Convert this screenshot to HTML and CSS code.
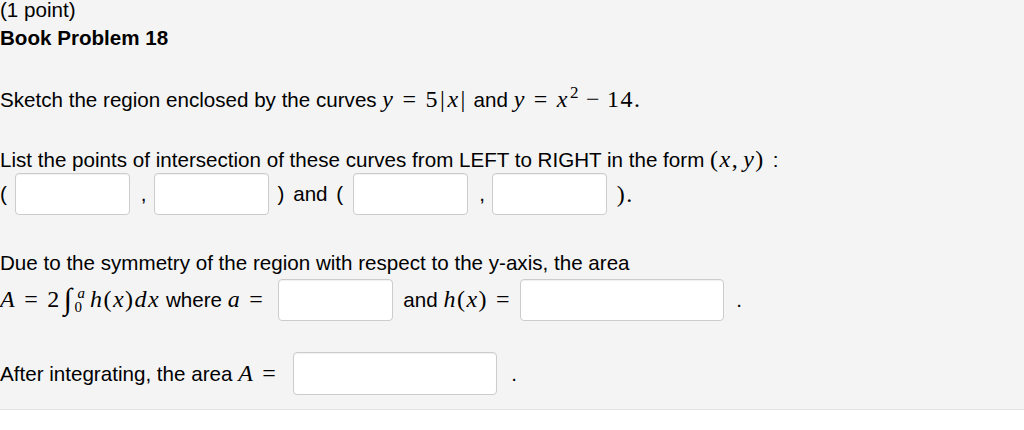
FILE: index.html
```html
<!DOCTYPE html>
<html>
<head>
<meta charset="utf-8">
<title>Book Problem 18</title>
<link rel="stylesheet" href="styles.css">
</head>
<body>
<div class="problem">
  <div class="points">(1 point)</div>
  <div class="title">Book Problem 18</div>

  <p class="text sketch">Sketch the region enclosed by the curves <span class="m"><i>y</i><span class="rel">=</span>5<span class="bar">|</span><i>x</i><span class="bar">|</span></span> and <span class="m"><i>y</i><span class="rel">=</span><i>x</i><sup class="sup">2</sup><span class="bin">−</span>14.</span></p>

  <p class="text list">List the points of intersection of these curves from LEFT to RIGHT in the form <span class="m">(<i>x</i>,<span class="thin"></span><i>y</i>)</span><span class="colon">:</span></p>
  <div class="row r1">
    <span class="piece">(</span>
    <input class="box sm first" type="text">
    <span class="piece comma">,</span>
    <input class="box sm" type="text">
    <span class="piece and">) and (</span>
    <input class="box sm" type="text">
    <span class="piece comma">,</span>
    <input class="box sm" type="text">
    <span class="piece close m">).</span>
  </div>

  <p class="text due">Due to the symmetry of the region with respect to the y-axis, the area</p>
  <div class="row r2">
    <span class="piece"><span class="m"><i>A</i><span class="rel">=</span>2<span class="int-gap"></span><span class="int">∫</span><span class="limits"><i class="up">a</i><span class="lo">0</span></span><span class="int-gap2"></span><i>h</i>(<i>x</i>)<i>dx</i></span> where <span class="m"><i>a</i><span class="rel">=</span></span></span>
    <input class="box sm a-box" type="text">
    <span class="piece andh">and <span class="m"><i>h</i>(<i>x</i>)<span class="rel">=</span></span></span>
    <input class="box lg h-box" type="text">
    <span class="piece dot">.</span>
  </div>

  <div class="row r3">
    <span class="piece">After integrating, the area <span class="m"><i>A</i><span class="rel">=</span></span></span>
    <input class="box lg area-box" type="text">
    <span class="piece dot2">.</span>
  </div>
</div>
</body>
</html>
```

FILE: styles.css
```css
html, body {
  margin: 0;
  padding: 0;
  background: #ffffff;
}

body {
  font-family: "Liberation Sans", Arial, Helvetica, sans-serif;
  font-size: 20.6px;
  color: #000;
}

.problem {
  display: flow-root;
  background: #f4f4f4;
  padding-bottom: 14px;
  border-bottom: 1px solid #e4e4e4;
  box-shadow: 0 1px 0 #d2d2d2;
}

.points {
  line-height: 20px;
}

.title {
  margin-top: 8px;
  line-height: 20px;
  font-weight: bold;
}

.text {
  margin: 0;
  line-height: 24px;
  white-space: nowrap;
}

.sketch { margin-top: 40px; }
.list { margin-top: 36px; }
.due { margin-top: 36px; }

/* math */
.m {
  font-family: "Liberation Serif", "Times New Roman", serif;
  font-size: 24px;
  line-height: 0;
  letter-spacing: 1.5px;
}
.m i {
  font-style: italic;
}
.rel {
  margin: 0 8px;
}
.bin {
  margin: 0 6px;
}
.bar {
  margin: 0 1px;
}
.sup {
  font-size: 17px;
  vertical-align: 9px;
  line-height: 0;
  margin-left: 1px;
}
.thin {
  display: inline-block;
  width: 4px;
}
.colon {
  margin-left: 8px;
}
.int-gap { display: inline-block; width: 3px; }
.int-gap2 { display: inline-block; width: 5px; }
.int {
  font-size: 30px;
  font-style: italic;
  line-height: 0;
  vertical-align: -2px;
}
.limits {
  display: inline-block;
  font-size: 15px;
  line-height: 14px;
  vertical-align: -5px;
  margin-left: 1px;
  letter-spacing: 0;
}
.limits .up,
.limits .lo {
  display: block;
}
.limits .up {
  margin-left: 3px;
}

/* rows with answer boxes */
.row {
  display: flex;
  align-items: center;
  line-height: 24px;
  white-space: nowrap;
}
.r1 { margin-top: 1px; }
.r2 { margin-top: 4px; }
.r3 { margin-top: 31px; }

.box {
  box-sizing: border-box;
  height: 42px;
  margin: 0;
  padding: 4px 6px;
  background: #fff;
  border: 1px solid #cccccc;
  border-radius: 4px;
  box-shadow: inset 0 1px 1px rgba(0, 0, 0, 0.06);
  font: inherit;
}
.sm { width: 115px; }
.lg { width: 204px; }

.first { margin-left: 8px; }
.comma { margin: 0 7px 0 11px; }
.and { margin: 0 10px 0 9px; word-spacing: 3px; }
.close { margin-left: 10px; }

.a-box { margin-left: 6px; }
.andh { margin: 0 0 0 10px; }
.h-box { margin-left: 1px; }
.dot { margin-left: 12px; }

.area-box { margin-left: 8px; height: 43px; }
.dot2 { margin-left: 14px; }
```
